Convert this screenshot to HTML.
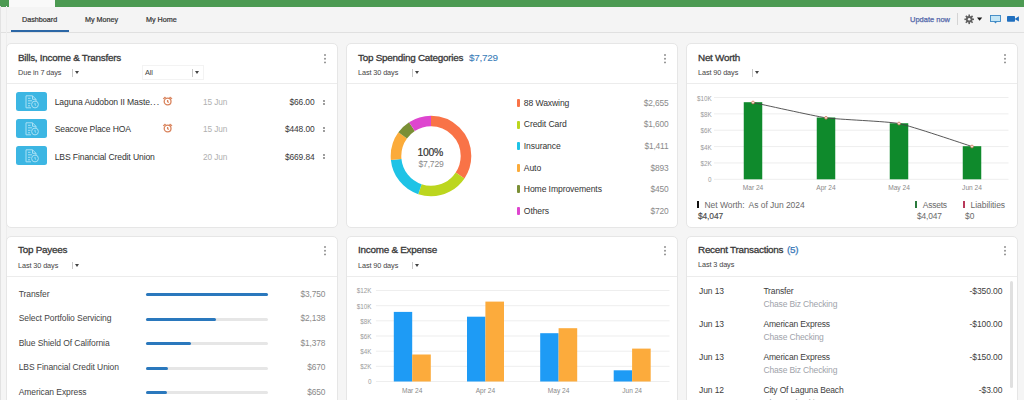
<!DOCTYPE html>
<html><head><meta charset="utf-8">
<style>
*{margin:0;padding:0;box-sizing:border-box}
html,body{width:1024px;height:400px;overflow:hidden;background:#f5f5f5;font-family:"Liberation Sans",sans-serif;color:#333}
.a{position:absolute;white-space:nowrap;line-height:1}
.card{position:absolute;background:#fff;border:1px solid #e6e6e6;border-radius:5px}
.ttl{font-size:9.9px;color:#383838;-webkit-text-stroke:0.3px #383838;letter-spacing:-0.25px}
.sub{font-size:7.3px;letter-spacing:-0.1px;color:#444}
.sep{position:absolute;width:1px;height:7.5px;background:#c8c8c8}
.tri{position:absolute;width:0;height:0;border-left:2.5px solid transparent;border-right:2.5px solid transparent;border-top:3px solid #444}
.hd{position:absolute;left:0;right:0;height:1px;background:#ececec}
.dots{position:absolute;width:2px}
.dots i{position:absolute;left:0;width:1.7px;height:1.7px;border-radius:50%;background:#808080}.dots i:nth-child(1){top:0}.dots i:nth-child(2){top:3.7px}.dots i:nth-child(3){top:7.4px}
</style></head><body>
<!-- top green bar -->
<div class="a" style="left:0;top:0;width:1024px;height:6.5px;background:#4c9a52"></div>
<div class="a" style="left:9px;top:0;width:46px;height:6.5px;background:#f9f9f9"></div>
<!-- tab bar -->
<div class="a" style="left:0;top:6.5px;width:1024px;height:26.5px;background:#f4f4f4;border-bottom:1px solid #e0e0e0"></div>
<div class="a" style="left:0;top:6px;width:1px;height:394px;background:#e2e2e2"></div><div class="a" style="left:6px;top:6px;width:1px;height:394px;background:#ededed"></div>
<div class="a" style="left:22px;top:16px;font-size:7.2px;color:#333;-webkit-text-stroke:0.2px #333">Dashboard</div>
<div class="a" style="left:85px;top:16px;font-size:7.2px;color:#333;-webkit-text-stroke:0.2px #333">My Money</div>
<div class="a" style="left:146px;top:16px;font-size:7.2px;color:#333;-webkit-text-stroke:0.2px #333">My Home</div>
<div class="a" style="left:11px;top:30.2px;width:58px;height:2px;background:#2c67a6"></div>
<div class="a" style="left:910px;top:15.8px;font-size:7.5px;color:#5468aa;-webkit-text-stroke:0.25px #5468aa">Update now</div>
<div class="a" style="left:956.5px;top:13px;width:1px;height:11.5px;background:#d4d4d4"></div>
<svg class="a" style="left:963px;top:13px" width="22" height="13" viewBox="0 0 22 13">
 <g fill="#606060"><circle cx="6.2" cy="6.3" r="3.3"/>
 <rect x="5.4" y="1.5" width="1.6" height="9.6"/><rect x="1.4" y="5.5" width="9.6" height="1.6"/>
 <rect x="5.4" y="1.5" width="1.6" height="9.6" transform="rotate(45 6.2 6.3)"/><rect x="5.4" y="1.5" width="1.6" height="9.6" transform="rotate(-45 6.2 6.3)"/></g>
 <circle cx="6.2" cy="6.3" r="1.3" fill="#f5f5f5"/>
 <path d="M14 4.6h5.2l-2.6 3.1z" fill="#1a1a1a"/>
</svg>
<svg class="a" style="left:989.5px;top:14.5px" width="11" height="9" viewBox="0 0 11 9">
 <rect x="0.5" y="0.5" width="10" height="6" fill="#c4e6f6" stroke="#3a86c4" stroke-width="0.9"/>
 <path d="M4 6.8h3l-1.5 1.8z" fill="#3a86c4"/>
</svg>
<svg class="a" style="left:1006.5px;top:16.3px" width="12" height="6" viewBox="0 0 12 6">
 <rect x="0" y="0" width="8" height="5.8" rx="0.7" fill="#1f6fbf"/><path d="M7.6 2.9L11.9 0.2V5.6z" fill="#1f6fbf"/>
</svg>
<!-- ============ CARD 1: Bills ============ -->
<div class="card" style="left:6px;top:43px;width:332px;height:185px">
 <div class="a ttl" style="left:11px;top:8.5px">Bills, Income &amp; Transfers</div>
 <div class="a sub" style="left:11px;top:24.9px">Due in 7 days</div>
 <div class="sep" style="left:65px;top:25px"></div>
 <div class="tri" style="left:68px;top:27.3px"></div>
 <div class="a" style="left:134.5px;top:21.3px;width:62px;height:15px;border:1px solid #f3f3f3"></div>
 <div class="a sub" style="left:138px;top:25px;font-size:7.4px">All</div>
 <div class="sep" style="left:185px;top:25px"></div>
 <div class="tri" style="left:188px;top:27.3px"></div>
 <svg class="a" style="left:316px;top:9px" width="4" height="11"><g fill="#8a8a8a"><circle cx="2" cy="2" r="0.95"/><circle cx="2" cy="5.7" r="0.95"/><circle cx="2" cy="9.4" r="0.95"/></g></svg>
 <div class="hd" style="top:38.5px"></div>
<div class="a" style="left:9px;top:48px"><svg width="31" height="19" viewBox="0 0 31 19"><rect width="31" height="19" rx="2.5" fill="#3cb6e3"/>
<g fill="none" stroke="#a8e0f4" stroke-width="1" transform="translate(0 0.3)"><path d="M10 3.5h6.5l3.5 3.5v1.8M10 3.5v12h5"/><path d="M16.5 3.5v3.5h3.5"/><circle cx="19" cy="12.2" r="3.4"/><path d="M12 6h2.5M12 8.5h4M12 11h2.5M12 13.5h2"/><path d="M19 10.6v1.8l1.1 0.8"/></g></svg></div>
<div class="a" style="left:47.7px;top:54.0px;font-size:8.6px;letter-spacing:-0.12px;color:#333">Laguna Audobon II Maste<span style="letter-spacing:1px">...</span></div>
<div class="a" style="left:154.5px;top:49.0px"><svg width="11" height="10" viewBox="0 0 11 10"><g fill="none" stroke="#d9835c" stroke-width="1.3"><circle cx="5.6" cy="5.5" r="3.4"/><path d="M5.6 3.9v1.8l1.2 0.9"/></g><path d="M1.2 2.8L2.9 0.9 3.6 1.7z M10 2.8L8.3 0.9 7.6 1.7z" fill="#d9835c" stroke="#d9835c" stroke-width="0.9"/></svg></div>
<div class="a" style="left:196px;top:54.0px;font-size:8.3px;letter-spacing:-0.1px;color:#b0b0b0">15 Jun</div>
<div class="a" style="left:0;width:307.5px;text-align:right;top:54.0px;font-size:8.4px;letter-spacing:-0.1px;color:#383838">$66.00</div>
<svg class="a" style="left:315px;top:54.70px" width="4" height="7"><g fill="#707070"><circle cx="2" cy="2" r="0.9"/><circle cx="2" cy="5" r="0.9"/></g></svg>
<div class="a" style="left:9px;top:75px"><svg width="31" height="19" viewBox="0 0 31 19"><rect width="31" height="19" rx="2.5" fill="#3cb6e3"/>
<g fill="none" stroke="#a8e0f4" stroke-width="1" transform="translate(0 0.3)"><path d="M10 3.5h6.5l3.5 3.5v1.8M10 3.5v12h5"/><path d="M16.5 3.5v3.5h3.5"/><circle cx="19" cy="12.2" r="3.4"/><path d="M12 6h2.5M12 8.5h4M12 11h2.5M12 13.5h2"/><path d="M19 10.6v1.8l1.1 0.8"/></g></svg></div>
<div class="a" style="left:47.7px;top:81.25px;font-size:8.6px;letter-spacing:-0.12px;color:#333">Seacove Place HOA</div>
<div class="a" style="left:154.5px;top:76.25px"><svg width="11" height="10" viewBox="0 0 11 10"><g fill="none" stroke="#d9835c" stroke-width="1.3"><circle cx="5.6" cy="5.5" r="3.4"/><path d="M5.6 3.9v1.8l1.2 0.9"/></g><path d="M1.2 2.8L2.9 0.9 3.6 1.7z M10 2.8L8.3 0.9 7.6 1.7z" fill="#d9835c" stroke="#d9835c" stroke-width="0.9"/></svg></div>
<div class="a" style="left:196px;top:81.25px;font-size:8.3px;letter-spacing:-0.1px;color:#b0b0b0">15 Jun</div>
<div class="a" style="left:0;width:307.5px;text-align:right;top:81.25px;font-size:8.4px;letter-spacing:-0.1px;color:#383838">$448.00</div>
<svg class="a" style="left:315px;top:81.95px" width="4" height="7"><g fill="#707070"><circle cx="2" cy="2" r="0.9"/><circle cx="2" cy="5" r="0.9"/></g></svg>
<div class="a" style="left:9px;top:102px"><svg width="31" height="19" viewBox="0 0 31 19"><rect width="31" height="19" rx="2.5" fill="#3cb6e3"/>
<g fill="none" stroke="#a8e0f4" stroke-width="1" transform="translate(0 0.3)"><path d="M10 3.5h6.5l3.5 3.5v1.8M10 3.5v12h5"/><path d="M16.5 3.5v3.5h3.5"/><circle cx="19" cy="12.2" r="3.4"/><path d="M12 6h2.5M12 8.5h4M12 11h2.5M12 13.5h2"/><path d="M19 10.6v1.8l1.1 0.8"/></g></svg></div>
<div class="a" style="left:47.7px;top:108.5px;font-size:8.6px;letter-spacing:-0.12px;color:#333">LBS Financial Credit Union</div>
<div class="a" style="left:196px;top:108.5px;font-size:8.3px;letter-spacing:-0.1px;color:#b0b0b0">20 Jun</div>
<div class="a" style="left:0;width:307.5px;text-align:right;top:108.5px;font-size:8.4px;letter-spacing:-0.1px;color:#383838">$669.84</div>
<svg class="a" style="left:315px;top:109.20px" width="4" height="7"><g fill="#707070"><circle cx="2" cy="2" r="0.9"/><circle cx="2" cy="5" r="0.9"/></g></svg>
</div>

<!-- ============ CARD 2: Top Spending ============ -->
<div class="card" style="left:346px;top:43px;width:332px;height:185px">
 <div class="a ttl" style="left:11px;top:8.5px">Top Spending Categories</div>
 <div class="a ttl" style="left:122px;top:8.5px;color:#3a7cb8;-webkit-text-stroke:0.1px #3a7cb8">$7,729</div>
 <div class="a sub" style="left:11px;top:24.9px">Last 30 days</div>
 <div class="sep" style="left:65px;top:25px"></div>
 <div class="tri" style="left:68px;top:27.3px"></div>
 <svg class="a" style="left:316px;top:9px" width="4" height="11"><g fill="#8a8a8a"><circle cx="2" cy="2" r="0.95"/><circle cx="2" cy="5.7" r="0.95"/><circle cx="2" cy="9.4" r="0.95"/></g></svg>
 <div class="hd" style="top:38.5px"></div>
<svg class="a" style="left:38.5px;top:66.7px" width="90" height="90" viewBox="0 0 90 90"><g transform="rotate(-90 45 45)"><circle cx="45" cy="45" r="35" fill="none" stroke="#f97347" stroke-width="10.6" stroke-dasharray="75.542 219.911" stroke-dashoffset="0.000"/><circle cx="45" cy="45" r="35" fill="none" stroke="#bcd61e" stroke-width="10.6" stroke-dasharray="45.524 219.911" stroke-dashoffset="-75.542"/><circle cx="45" cy="45" r="35" fill="none" stroke="#1ec3e6" stroke-width="10.6" stroke-dasharray="40.147 219.911" stroke-dashoffset="-121.067"/><circle cx="45" cy="45" r="35" fill="none" stroke="#fbab3a" stroke-width="10.6" stroke-dasharray="25.408 219.911" stroke-dashoffset="-161.213"/><circle cx="45" cy="45" r="35" fill="none" stroke="#7b8f36" stroke-width="10.6" stroke-dasharray="12.804 219.911" stroke-dashoffset="-186.622"/><circle cx="45" cy="45" r="35" fill="none" stroke="#de45cf" stroke-width="10.6" stroke-dasharray="20.486 219.911" stroke-dashoffset="-199.425"/></g></svg>
<div class="a" style="left:70.5px;top:103.5px;font-size:10.4px;letter-spacing:-0.3px;color:#333;-webkit-text-stroke:0.2px #333">100%</div>
<div class="a" style="left:71.5px;top:115.5px;font-size:8.6px;letter-spacing:-0.2px;color:#8a8a8a">$7,729</div>
<div class="a" style="left:170.3px;top:55.0px;width:2.7px;height:8px;border-radius:1px;background:#f97347"></div>
<div class="a" style="left:176.8px;top:54.7px;font-size:8.6px;letter-spacing:-0.1px;color:#333">88 Waxwing</div>
<div class="a" style="left:0;width:321.5px;text-align:right;top:54.7px;font-size:8.4px;letter-spacing:-0.15px;color:#8a8a8a">$2,655</div>
<div class="a" style="left:170.3px;top:76.6px;width:2.7px;height:8px;border-radius:1px;background:#bcd61e"></div>
<div class="a" style="left:176.8px;top:76.3px;font-size:8.6px;letter-spacing:-0.1px;color:#333">Credit Card</div>
<div class="a" style="left:0;width:321.5px;text-align:right;top:76.3px;font-size:8.4px;letter-spacing:-0.15px;color:#8a8a8a">$1,600</div>
<div class="a" style="left:170.3px;top:98.2px;width:2.7px;height:8px;border-radius:1px;background:#1ec3e6"></div>
<div class="a" style="left:176.8px;top:97.9px;font-size:8.6px;letter-spacing:-0.1px;color:#333">Insurance</div>
<div class="a" style="left:0;width:321.5px;text-align:right;top:97.9px;font-size:8.4px;letter-spacing:-0.15px;color:#8a8a8a">$1,411</div>
<div class="a" style="left:170.3px;top:119.80000000000001px;width:2.7px;height:8px;border-radius:1px;background:#fbab3a"></div>
<div class="a" style="left:176.8px;top:119.50000000000001px;font-size:8.6px;letter-spacing:-0.1px;color:#333">Auto</div>
<div class="a" style="left:0;width:321.5px;text-align:right;top:119.50000000000001px;font-size:8.4px;letter-spacing:-0.15px;color:#8a8a8a">$893</div>
<div class="a" style="left:170.3px;top:141.4px;width:2.7px;height:8px;border-radius:1px;background:#7b8f36"></div>
<div class="a" style="left:176.8px;top:141.1px;font-size:8.6px;letter-spacing:-0.1px;color:#333">Home Improvements</div>
<div class="a" style="left:0;width:321.5px;text-align:right;top:141.1px;font-size:8.4px;letter-spacing:-0.15px;color:#8a8a8a">$450</div>
<div class="a" style="left:170.3px;top:163.0px;width:2.7px;height:8px;border-radius:1px;background:#de45cf"></div>
<div class="a" style="left:176.8px;top:162.7px;font-size:8.6px;letter-spacing:-0.1px;color:#333">Others</div>
<div class="a" style="left:0;width:321.5px;text-align:right;top:162.7px;font-size:8.4px;letter-spacing:-0.15px;color:#8a8a8a">$720</div>
</div>

<!-- ============ CARD 3: Net Worth ============ -->
<div class="card" style="left:686px;top:43px;width:332px;height:185px">
 <div class="a ttl" style="left:11px;top:8.5px">Net Worth</div>
 <div class="a sub" style="left:11px;top:24.9px">Last 90 days</div>
 <div class="sep" style="left:65px;top:25px"></div>
 <div class="tri" style="left:68px;top:27.3px"></div>
 <svg class="a" style="left:316px;top:9px" width="4" height="11"><g fill="#8a8a8a"><circle cx="2" cy="2" r="0.95"/><circle cx="2" cy="5.7" r="0.95"/><circle cx="2" cy="9.4" r="0.95"/></g></svg>
 <div class="hd" style="top:38.5px"></div>
</div>

<!-- ============ CARD 4: Top Payees ============ -->
<div class="card" style="left:6px;top:236px;width:332px;height:200px">
 <div class="a ttl" style="left:11px;top:7.8px">Top Payees</div>
 <div class="a sub" style="left:11px;top:25.4px">Last 30 days</div>
 <div class="sep" style="left:64.5px;top:24.8px"></div>
 <div class="tri" style="left:67.5px;top:27px"></div>
 <svg class="a" style="left:316px;top:8.3px" width="4" height="11"><g fill="#8a8a8a"><circle cx="2" cy="2" r="0.95"/><circle cx="2" cy="5.7" r="0.95"/><circle cx="2" cy="9.4" r="0.95"/></g></svg>
 <div class="hd" style="top:39px"></div>
</div>

<!-- ============ CARD 5: Income & Expense ============ -->
<div class="card" style="left:346px;top:236px;width:332px;height:200px">
 <div class="a ttl" style="left:11px;top:7.8px">Income &amp; Expense</div>
 <div class="a sub" style="left:11px;top:25.4px">Last 90 days</div>
 <div class="sep" style="left:64.5px;top:24.8px"></div>
 <div class="tri" style="left:67.5px;top:27px"></div>
 <svg class="a" style="left:316px;top:8.3px" width="4" height="11"><g fill="#8a8a8a"><circle cx="2" cy="2" r="0.95"/><circle cx="2" cy="5.7" r="0.95"/><circle cx="2" cy="9.4" r="0.95"/></g></svg>
 <div class="hd" style="top:39px"></div>
</div>

<!-- ============ CARD 6: Recent Transactions ============ -->
<div class="card" style="left:686px;top:236px;width:332px;height:200px">
 <div class="a ttl" style="left:11px;top:7.8px">Recent Transactions</div>
 <div class="a ttl" style="left:100px;top:7.8px;color:#3878b8;-webkit-text-stroke:0.25px #3878b8">(5)</div>
 <div class="a sub" style="left:11px;top:24px;font-size:7.3px">Last 3 days</div>
 <svg class="a" style="left:316px;top:8.3px" width="4" height="11"><g fill="#8a8a8a"><circle cx="2" cy="2" r="0.95"/><circle cx="2" cy="5.7" r="0.95"/><circle cx="2" cy="9.4" r="0.95"/></g></svg>
 <div class="hd" style="top:39px"></div>
</div>

<!-- NETWORTH CHART -->
<svg class="a" style="left:0;top:0" width="1024" height="400">
<rect x="714" y="97.00" width="294.5" height="1" fill="#eeeeee"/><rect x="714" y="113.36" width="294.5" height="1" fill="#eeeeee"/><rect x="714" y="129.72" width="294.5" height="1" fill="#eeeeee"/><rect x="714" y="146.08" width="294.5" height="1" fill="#eeeeee"/><rect x="714" y="162.44" width="294.5" height="1" fill="#eeeeee"/><rect x="714" y="178.80" width="294.5" height="1" fill="#eeeeee"/><rect x="743.75" y="102.2" width="18.5" height="77.10" fill="#0f8a2c"/><rect x="816.75" y="117.5" width="18.5" height="61.80" fill="#0f8a2c"/><rect x="889.75" y="123.25" width="18.5" height="56.05" fill="#0f8a2c"/><rect x="962.75" y="146.2" width="18.5" height="33.10" fill="#0f8a2c"/><path d="M753 102.5 C758.8 103.7 814.3 116.1 826 117.8 C837.7 119.5 887.3 121.3 899 123.55 C910.7 125.8 966.2 144.7 972 146.5" fill="none" stroke="#454545" stroke-width="0.9"/><circle cx="753" cy="102.5" r="1.4" fill="#f4e8e0" stroke="#d06a50" stroke-width="0.7"/><circle cx="826" cy="117.8" r="1.4" fill="#f4e8e0" stroke="#d06a50" stroke-width="0.7"/><circle cx="899" cy="123.55" r="1.4" fill="#f4e8e0" stroke="#d06a50" stroke-width="0.7"/><circle cx="972" cy="146.5" r="1.4" fill="#f4e8e0" stroke="#d06a50" stroke-width="0.7"/></svg>
<div class="a" style="left:650.6px;width:61px;text-align:right;top:95.60px;font-size:6.3px;color:#9a9a9a">$10K</div>
<div class="a" style="left:650.6px;width:61px;text-align:right;top:111.96px;font-size:6.3px;color:#9a9a9a">$8K</div>
<div class="a" style="left:650.6px;width:61px;text-align:right;top:128.32px;font-size:6.3px;color:#9a9a9a">$6K</div>
<div class="a" style="left:650.6px;width:61px;text-align:right;top:144.68px;font-size:6.3px;color:#9a9a9a">$4K</div>
<div class="a" style="left:650.6px;width:61px;text-align:right;top:161.04px;font-size:6.3px;color:#9a9a9a">$2K</div>
<div class="a" style="left:650.6px;width:61px;text-align:right;top:177.40px;font-size:6.3px;color:#9a9a9a">0</div>
<div class="a" style="left:733px;width:40px;text-align:center;top:184.6px;font-size:6.6px;color:#8a8a8a">Mar 24</div>
<div class="a" style="left:806px;width:40px;text-align:center;top:184.6px;font-size:6.6px;color:#8a8a8a">Apr 24</div>
<div class="a" style="left:879px;width:40px;text-align:center;top:184.6px;font-size:6.6px;color:#8a8a8a">May 24</div>
<div class="a" style="left:952px;width:40px;text-align:center;top:184.6px;font-size:6.6px;color:#8a8a8a">Jun 24</div>
<div class="a" style="left:697px;top:200.5px;width:2px;height:7px;background:#111"></div>
<div class="a" style="left:704.5px;top:201.3px;font-size:8.5px;letter-spacing:-0.05px;color:#6a6a6a">Net Worth:&nbsp; As of Jun 2024</div>
<div class="a" style="left:698px;top:212px;font-size:8.4px;letter-spacing:-0.1px;color:#4a4a4a;-webkit-text-stroke:0.15px #4a4a4a">$4,047</div>
<div class="a" style="left:915px;top:200.5px;width:2px;height:7px;background:#2a7a3c"></div>
<div class="a" style="left:922.8px;top:201.3px;font-size:8.5px;letter-spacing:-0.25px;color:#6a6a6a">Assets</div>
<div class="a" style="left:917px;top:212px;font-size:8.4px;letter-spacing:-0.15px;color:#6a6a6a">$4,047</div>
<div class="a" style="left:963.3px;top:200.5px;width:2px;height:7px;background:#b8395a"></div>
<div class="a" style="left:970.6px;top:201.3px;font-size:8.5px;letter-spacing:-0.05px;color:#6a6a6a">Liabilities</div>
<div class="a" style="left:965px;top:212px;font-size:8.4px;color:#6a6a6a">$0</div>
<!-- INCOME CHART -->
<svg class="a" style="left:0;top:0" width="1024" height="400">
<rect x="375.9" y="381.00" width="293.6" height="1" fill="#eeeeee"/><rect x="375.9" y="365.83" width="293.6" height="1" fill="#eeeeee"/><rect x="375.9" y="350.67" width="293.6" height="1" fill="#eeeeee"/><rect x="375.9" y="335.50" width="293.6" height="1" fill="#eeeeee"/><rect x="375.9" y="320.33" width="293.6" height="1" fill="#eeeeee"/><rect x="375.9" y="305.17" width="293.6" height="1" fill="#eeeeee"/><rect x="375.9" y="290.00" width="293.6" height="1" fill="#eeeeee"/><rect x="393.8" y="311.9" width="18.4" height="69.60" fill="#1e9bf5"/><rect x="412.2" y="354.5" width="18.6" height="27.00" fill="#fcab3c"/><rect x="467.0" y="316.7" width="18.4" height="64.80" fill="#1e9bf5"/><rect x="485.4" y="301.6" width="18.6" height="79.90" fill="#fcab3c"/><rect x="540.2" y="333.2" width="18.4" height="48.30" fill="#1e9bf5"/><rect x="558.6" y="328.2" width="18.6" height="53.30" fill="#fcab3c"/><rect x="613.7" y="370.3" width="18.4" height="11.20" fill="#1e9bf5"/><rect x="632.1" y="348.6" width="18.6" height="32.90" fill="#fcab3c"/></svg>
<div class="a" style="left:320.5px;width:51px;text-align:right;top:379.40px;font-size:6.3px;color:#9a9a9a">0</div>
<div class="a" style="left:320.5px;width:51px;text-align:right;top:364.23px;font-size:6.3px;color:#9a9a9a">$2K</div>
<div class="a" style="left:320.5px;width:51px;text-align:right;top:349.07px;font-size:6.3px;color:#9a9a9a">$4K</div>
<div class="a" style="left:320.5px;width:51px;text-align:right;top:333.90px;font-size:6.3px;color:#9a9a9a">$6K</div>
<div class="a" style="left:320.5px;width:51px;text-align:right;top:318.73px;font-size:6.3px;color:#9a9a9a">$8K</div>
<div class="a" style="left:320.5px;width:51px;text-align:right;top:303.57px;font-size:6.3px;color:#9a9a9a">$10K</div>
<div class="a" style="left:320.5px;width:51px;text-align:right;top:288.40px;font-size:6.3px;color:#9a9a9a">$12K</div>
<div class="a" style="left:392.2px;width:40px;text-align:center;top:388px;font-size:6.6px;color:#8a8a8a">Mar 24</div>
<div class="a" style="left:465.4px;width:40px;text-align:center;top:388px;font-size:6.6px;color:#8a8a8a">Apr 24</div>
<div class="a" style="left:538.6px;width:40px;text-align:center;top:388px;font-size:6.6px;color:#8a8a8a">May 24</div>
<div class="a" style="left:612.1px;width:40px;text-align:center;top:388px;font-size:6.6px;color:#8a8a8a">Jun 24</div>
<!-- PAYEES -->
<div class="a" style="left:18.7px;top:289.9px;font-size:8.5px;letter-spacing:-0.07px;color:#444">Transfer</div>
<div class="a" style="left:146.2px;top:293.2px;width:122.3px;height:3px;border-radius:1.5px;background:#e6e6e6"></div>
<div class="a" style="left:146.2px;top:293.2px;width:122.3px;height:3px;border-radius:1.5px;background:#2a78bd"></div>
<div class="a" style="left:250px;width:75.3px;text-align:right;top:289.9px;font-size:8.4px;letter-spacing:-0.12px;color:#8a8a8a">$3,750</div>
<div class="a" style="left:18.7px;top:314.4px;font-size:8.5px;letter-spacing:-0.07px;color:#444">Select Portfolio Servicing</div>
<div class="a" style="left:146.2px;top:317.7px;width:122.3px;height:3px;border-radius:1.5px;background:#e6e6e6"></div>
<div class="a" style="left:146.2px;top:317.7px;width:69.7px;height:3px;border-radius:1.5px;background:#2a78bd"></div>
<div class="a" style="left:250px;width:75.3px;text-align:right;top:314.4px;font-size:8.4px;letter-spacing:-0.12px;color:#8a8a8a">$2,138</div>
<div class="a" style="left:18.7px;top:338.9px;font-size:8.5px;letter-spacing:-0.07px;color:#444">Blue Shield Of California</div>
<div class="a" style="left:146.2px;top:342.2px;width:122.3px;height:3px;border-radius:1.5px;background:#e6e6e6"></div>
<div class="a" style="left:146.2px;top:342.2px;width:44.9px;height:3px;border-radius:1.5px;background:#2a78bd"></div>
<div class="a" style="left:250px;width:75.3px;text-align:right;top:338.9px;font-size:8.4px;letter-spacing:-0.12px;color:#8a8a8a">$1,378</div>
<div class="a" style="left:18.7px;top:363.4px;font-size:8.5px;letter-spacing:-0.07px;color:#444">LBS Financial Credit Union</div>
<div class="a" style="left:146.2px;top:366.7px;width:122.3px;height:3px;border-radius:1.5px;background:#e6e6e6"></div>
<div class="a" style="left:146.2px;top:366.7px;width:21.9px;height:3px;border-radius:1.5px;background:#2a78bd"></div>
<div class="a" style="left:250px;width:75.3px;text-align:right;top:363.4px;font-size:8.4px;letter-spacing:-0.12px;color:#8a8a8a">$670</div>
<div class="a" style="left:18.7px;top:387.9px;font-size:8.5px;letter-spacing:-0.07px;color:#444">American Express</div>
<div class="a" style="left:146.2px;top:391.2px;width:122.3px;height:3px;border-radius:1.5px;background:#e6e6e6"></div>
<div class="a" style="left:146.2px;top:391.2px;width:21.2px;height:3px;border-radius:1.5px;background:#2a78bd"></div>
<div class="a" style="left:250px;width:75.3px;text-align:right;top:387.9px;font-size:8.4px;letter-spacing:-0.12px;color:#8a8a8a">$650</div>
<!-- TRANSACTIONS -->
<div class="a" style="left:699px;top:287.3px;font-size:8.5px;letter-spacing:-0.1px;color:#404040">Jun 13</div>
<div class="a" style="left:763.4px;top:287.3px;font-size:8.5px;letter-spacing:-0.15px;color:#404040">Transfer</div>
<div class="a" style="left:763.4px;top:300.3px;font-size:8.5px;letter-spacing:-0.15px;color:#a0a3aa">Chase Biz Checking</div>
<div class="a" style="left:900px;width:102.3px;text-align:right;top:287.3px;font-size:8.5px;letter-spacing:-0.1px;color:#404040">-$350.00</div>
<div class="a" style="left:699px;top:320.2px;font-size:8.5px;letter-spacing:-0.1px;color:#404040">Jun 13</div>
<div class="a" style="left:763.4px;top:320.2px;font-size:8.5px;letter-spacing:-0.15px;color:#404040">American Express</div>
<div class="a" style="left:763.4px;top:333.2px;font-size:8.5px;letter-spacing:-0.15px;color:#a0a3aa">Chase Checking</div>
<div class="a" style="left:900px;width:102.3px;text-align:right;top:320.2px;font-size:8.5px;letter-spacing:-0.1px;color:#404040">-$100.00</div>
<div class="a" style="left:699px;top:353.2px;font-size:8.5px;letter-spacing:-0.1px;color:#404040">Jun 13</div>
<div class="a" style="left:763.4px;top:353.2px;font-size:8.5px;letter-spacing:-0.15px;color:#404040">American Express</div>
<div class="a" style="left:763.4px;top:366.2px;font-size:8.5px;letter-spacing:-0.15px;color:#a0a3aa">Chase Biz Checking</div>
<div class="a" style="left:900px;width:102.3px;text-align:right;top:353.2px;font-size:8.5px;letter-spacing:-0.1px;color:#404040">-$150.00</div>
<div class="a" style="left:699px;top:386.2px;font-size:8.5px;letter-spacing:-0.1px;color:#404040">Jun 12</div>
<div class="a" style="left:763.4px;top:386.2px;font-size:8.5px;letter-spacing:-0.15px;color:#404040">City Of Laguna Beach</div>
<div class="a" style="left:763.4px;top:399.2px;font-size:8.5px;letter-spacing:-0.15px;color:#a0a3aa">Chase Checking</div>
<div class="a" style="left:900px;width:102.3px;text-align:right;top:386.2px;font-size:8.5px;letter-spacing:-0.1px;color:#404040">-$3.00</div>
<div class="a" style="left:1010px;top:280.5px;width:3px;height:107px;border-radius:1.5px;background:#e0e0e0"></div>
</body></html>
